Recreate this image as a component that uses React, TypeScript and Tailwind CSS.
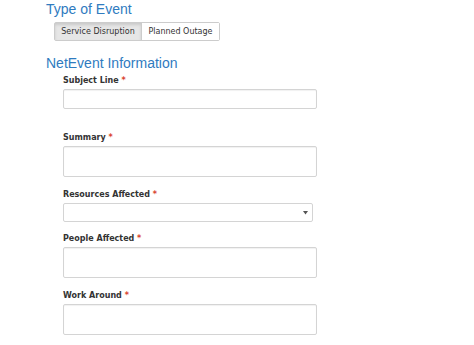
import React from "react";

const labelCls =
  "block text-[8px] leading-[11px] font-bold text-[#333333] [font-family:'DejaVu_Sans',Verdana,sans-serif]";
const boxCls =
  "block w-[254px] border border-[#d4d4d4] rounded-[2px] bg-white shadow-[inset_0_1px_1px_rgba(0,0,0,0.06)]";

function Label({ text }: { text: string }) {
  return (
    <label className={labelCls}>
      {text} <span className="text-[#d9432f]">*</span>
    </label>
  );
}

export default function App() {
  return (
    <div className="w-[474px] h-[345px] bg-white pl-[46px] overflow-hidden">
      <h2 className="text-[14px] leading-[18px] text-[#2f7bbf] [font-family:'Liberation_Sans',Arial,sans-serif] font-normal">
        Type of Event
      </h2>
      <div className="mt-[4px] ml-[8px] flex w-fit border border-[#cccccc] rounded-[2px] [font-family:'DejaVu_Sans',Verdana,sans-serif] text-[8px] text-[#333333]">
        <div className="w-[87px] h-[17px] flex items-center justify-center bg-[#e6e6e6] shadow-[inset_0_2px_3px_rgba(0,0,0,0.12)] border-r border-[#cccccc]">
          Service Disruption
        </div>
        <div className="w-[77px] h-[17px] flex items-center justify-center bg-white">
          Planned Outage
        </div>
      </div>
      <h2 className="mt-[13px] text-[14px] leading-[18px] text-[#2f7bbf] [font-family:'Liberation_Sans',Arial,sans-serif] font-normal">
        NetEvent Information
      </h2>
      <div className="ml-[17px]">
        <div className="mt-[3px]">
          <Label text="Subject Line" />
          <div className={`${boxCls} mt-[3px] h-[20px]`} />
        </div>
        <div className="mt-[23px]">
          <Label text="Summary" />
          <div className={`${boxCls} mt-[3px] h-[31px]`} />
        </div>
        <div className="mt-[12px]">
          <Label text="Resources Affected" />
          <div className="mt-[3px] w-[250px] h-[19px] border border-[#d4d4d4] rounded-[2px] bg-white flex items-center justify-end pr-[4px]">
            <svg width="5" height="4" viewBox="0 0 5 4">
              <path d="M0 0 L5 0 L2.5 3.5 Z" fill="#555555" />
            </svg>
          </div>
        </div>
        <div className="mt-[11px]">
          <Label text="People Affected" />
          <div className={`${boxCls} mt-[3px] h-[31px]`} />
        </div>
        <div className="mt-[12px]">
          <Label text="Work Around" />
          <div className={`${boxCls} mt-[3px] h-[31px]`} />
        </div>
      </div>
    </div>
  );
}
